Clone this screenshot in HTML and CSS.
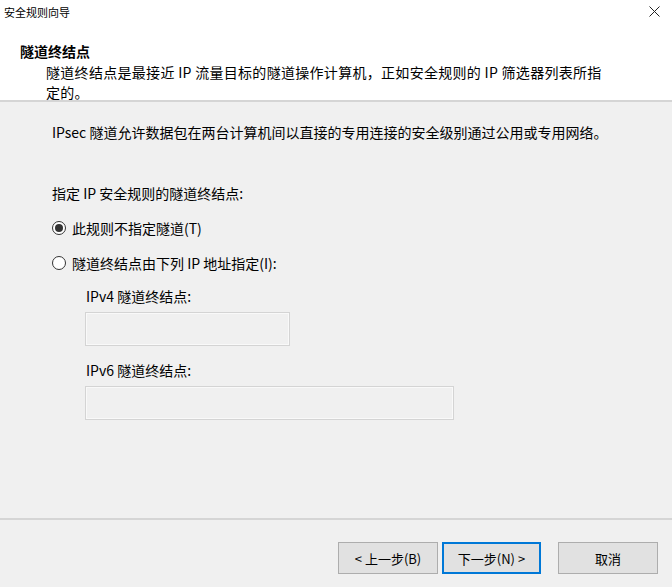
FILE: index.html
```html
<!DOCTYPE html>
<html lang="zh-CN">
<head>
<meta charset="utf-8">
<title>安全规则向导</title>
<link rel="stylesheet" href="styles.css">
</head>
<body>
<div class="window">
  <div class="titlebar">
    <span class="title">安全规则向导</span>
    <span class="close" aria-label="关闭">
      <svg width="11" height="11" viewBox="0 0 11 11"><path d="M0.5 0.5 L10.5 10.5 M10.5 0.5 L0.5 10.5" stroke="#222" stroke-width="1" fill="none"/></svg>
    </span>
  </div>
  <div class="header">
    <div class="heading">隧道终结点</div>
    <div class="desc">隧道终结点是最接近 IP 流量目标的隧道操作计算机，正如安全规则的 IP 筛选器列表所指定的。</div>
  </div>
  <div class="main">
    <p class="intro">IPsec 隧道允许数据包在两台计算机间以直接的专用连接的安全级别通过公用或专用网络。</p>
    <p class="prompt">指定 IP 安全规则的隧道终结点:</p>
    <div class="radio-row"><span class="radio checked"></span><span>此规则不指定隧道(T)</span></div>
    <div class="radio-row second"><span class="radio"></span><span>隧道终结点由下列 IP 地址指定(I):</span></div>
    <div class="sub">
      <div class="field-label">IPv4 隧道终结点:</div>
      <div class="textbox v4"></div>
      <div class="field-label v6label">IPv6 隧道终结点:</div>
      <div class="textbox v6"></div>
    </div>
  </div>
  <div class="footer">
    <button class="btn back">&lt; 上一步(B)</button>
    <button class="btn next">下一步(N) &gt;</button>
    <button class="btn cancel">取消</button>
  </div>
</div>
</body>
</html>
```

FILE: styles.css
```css
* { box-sizing: border-box; }
html, body {
  margin: 0;
  padding: 0;
  background: #f0f0f0;
}
body {
  font-family: "Noto Sans CJK SC", "Noto Sans", sans-serif;
  font-size: 14px;
  color: #000;
}
.window {
  width: 672px;
  height: 587px;
  display: flex;
  flex-direction: column;
  background: #f0f0f0;
}
.titlebar {
  height: 24px;
  background: #fff;
  display: flex;
  align-items: center;
  justify-content: space-between;
  padding: 0 12px 0 4px;
}
.title {
  font-size: 11px;
  line-height: 24px;
}
.close {
  display: flex;
  margin-top: -2px;
}
.header {
  height: 78px;
  background: #fff;
  border-bottom: 2px solid #d5d5d5;
  padding: 17px 0 0 20px;
}
.heading {
  font-weight: bold;
  line-height: 20px;
  margin-bottom: 1px;
}
.desc {
  line-height: 20px;
  margin-left: 26px;
  width: 560px;
  letter-spacing: 0.3px;
}
.main {
  height: 416px;
  padding: 20px 0 0 52px;
}
.main p {
  margin: 0;
  line-height: 20px;
}
.prompt {
  margin-top: 41px !important;
}
.radio-row {
  display: flex;
  align-items: center;
  gap: 6px;
  line-height: 20px;
  margin-top: 15px;
}
.radio {
  width: 14px;
  height: 14px;
  border: 1px solid #333;
  border-radius: 50%;
  background: #fff;
  display: flex;
  align-items: center;
  justify-content: center;
}
.radio.checked::after {
  content: "";
  width: 8px;
  height: 8px;
  border-radius: 50%;
  background: #333;
}
.sub {
  padding-left: 33px;
  margin-top: 13px;
}
.field-label {
  line-height: 20px;
  padding-left: 1px;
}
.v6label {
  margin-top: 14px;
}
.textbox {
  height: 34px;
  margin-top: 6px;
  border: 1px solid #d4d4d4;
  box-shadow: inset 0 0 0 1px #f9f9f9;
  background: #f0f0f0;
}
.textbox.v4 { width: 205px; }
.textbox.v6 { width: 369px; }
.footer {
  border-top: 2px solid #d5d5d5;
  display: flex;
  justify-content: flex-end;
  padding: 22px 14px 0 0;
  flex: 1;
}
.btn {
  font-family: inherit;
  font-size: 13px;
  width: 100px;
  height: 32px;
  background: #e1e1e1;
  border: 1px solid #adadad;
  color: #000;
  padding: 0;
  margin: 0;
}
.btn.next {
  margin-left: 4px;
  width: 99px;
  border: 2px solid #0078d7;
}
.btn.cancel {
  margin-left: 17px;
}
```
